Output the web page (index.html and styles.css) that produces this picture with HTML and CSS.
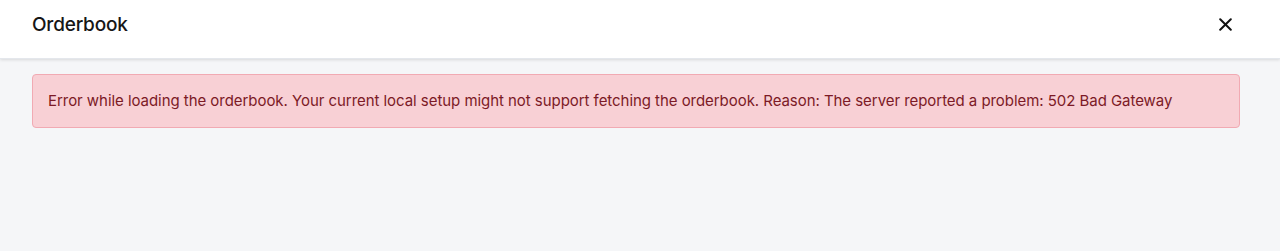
FILE: index.html
```html
<!DOCTYPE html>
<html>
<head>
<meta charset="utf-8">
<link rel="stylesheet" href="styles.css">
</head>
<body>
<div class="modal">
  <header class="modal-header">
    <h5 class="modal-title">Orderbook</h5>
    <button class="close" aria-label="Close">
      <svg width="13" height="13" viewBox="0 0 13 13"><path d="M1.2 1.2L11.8 11.8M11.8 1.2L1.2 11.8" stroke="#111" stroke-width="2" stroke-linecap="round"/></svg>
    </button>
  </header>
  <div class="modal-body">
    <div class="alert">Error while loading the orderbook. Your current local setup might not support fetching the orderbook. Reason: The server reported a problem: 502 Bad Gateway</div>
  </div>
</div>
</body>
</html>
```
FILE: styles.css
```css
* { box-sizing: border-box; }
html, body { margin: 0; padding: 0; height: 100%; }
body { font-family: Inter, "Noto Sans", sans-serif; background: #f5f6f8; color: #111; }
.modal { display: flex; flex-direction: column; height: 100%; }
.modal-header {
  height: 59px; background: #fff; display: flex; align-items: center; justify-content: space-between;
  padding: 0 48px 9px 32px; box-shadow: 0 1px 3px rgba(0,0,0,0.12); border-bottom: 1px solid #e4e7ec; position: relative; z-index: 1;
}
.modal-title { margin: 0; font-size: 19px; line-height: 24px; font-weight: 500; letter-spacing: -0.2px; color: #161616; }
.close { background: none; border: 0; padding: 0; width: 13px; height: 13px; display: flex; align-items: center; justify-content: center; }
.modal-body { padding: 15px 40px 0 32px; }
.alert {
  background: #f8d0d5; border: 1px solid #f1aab3; color: #7c1a26; border-radius: 4px;
  padding: 15px 15px; font-size: 15px; line-height: 22px; letter-spacing: -0.05px;
}
```
